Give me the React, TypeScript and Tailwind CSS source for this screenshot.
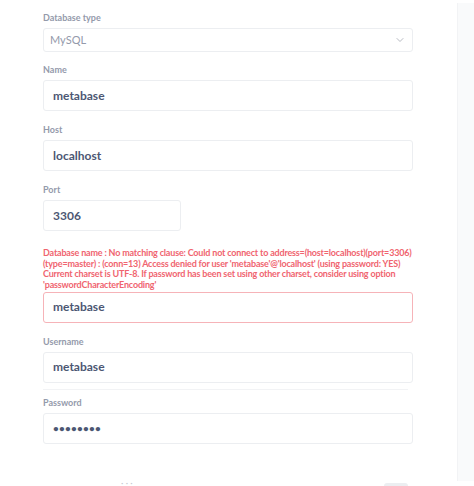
import React from 'react'
import { ChevronDown } from 'lucide-react'

const Label = ({ children }: { children: React.ReactNode }) => (
  <div className="text-[9px] font-bold text-[#949aab] leading-[12px] mb-[4px]">{children}</div>
)

const Field = ({ value, error, width }: { value: string; error?: boolean; width?: string }) => (
  <div
    className={`h-[31px] flex items-center px-[9px] rounded-[3px] bg-white border ${
      error ? 'border-[#f6b3b8]' : 'border-[#eceef1]'
    } ${width ?? 'w-full'}`}
  >
    <span className="text-[12px] font-bold text-[#4c5773]">{value}</span>
  </div>
)

const errorLines = [
  'Database name : No matching clause: Could not connect to address=(host=localhost)(port=3306)',
  "(type=master) : (conn=13) Access denied for user 'metabase'@'localhost' (using password: YES)",
  'Current charset is UTF-8. If password has been set using other charset, consider using option',
  "'passwordCharacterEncoding'",
]

export default function App() {
  return (
    <div className="w-[474px] h-[486px] bg-white flex overflow-hidden" style={{ fontFamily: 'Lato, "Open Sans", sans-serif' }}>
      <div className="w-[457px] shrink-0 pl-[43px] pt-[12px]">
        <div className="w-[370px]">
          {/* Database type */}
          <Label>Database type</Label>
          <div className="h-[24px] flex items-center justify-between px-[6px] rounded-[3px] border border-[#eceef1] bg-white">
            <span className="text-[11px] text-[#949aab]">MySQL</span>
            <ChevronDown className="h-[12px] w-[12px] text-[#b8bbc3]" strokeWidth={2} />
          </div>

          <div className="mt-[12px]">
            <Label>Name</Label>
            <Field value="metabase" />
          </div>

          <div className="mt-[13px]">
            <Label>Host</Label>
            <Field value="localhost" />
          </div>

          <div className="mt-[13px]">
            <Label>Port</Label>
            <Field value="3306" width="w-[138px]" />
          </div>

          <div className="mt-[17px]">
            <div className="text-[9px] font-bold text-[#f0646f] leading-[10.7px] mb-[1px] tracking-[-0.18px] whitespace-nowrap">
              {errorLines.map((l) => (
                <div key={l}>{l}</div>
              ))}
            </div>
            <Field value="metabase" error />
          </div>

          <div className="mt-[13px]">
            <Label>Username</Label>
            <Field value="metabase" />
          </div>

          <div className="border-t border-[#f2f3f5] mt-[6px] mr-[5px]" />

          <div className="mt-[7px]">
            <Label>Password</Label>
            <div className="h-[31px] flex items-center px-[9px] rounded-[3px] bg-white border border-[#eceef1]">
              <span className="text-[10px] font-bold text-[#4c5773] tracking-[0.2px]">••••••••</span>
            </div>
          </div>

          <div className="mt-[34px] flex justify-between items-end">
            <span className="ml-[78px] text-[9px] leading-[9px] text-[#c7cad1]">·  ·  ·</span>
            <div className="w-[24px] h-[4px] mr-[5px] bg-[#eceef1] rounded-t-[3px]" />
          </div>
        </div>
      </div>
      <div className="w-[17px] mt-[3px] mb-[5px] bg-[#f9fafb] border-l border-[#f2f3f5]" />
    </div>
  )
}
